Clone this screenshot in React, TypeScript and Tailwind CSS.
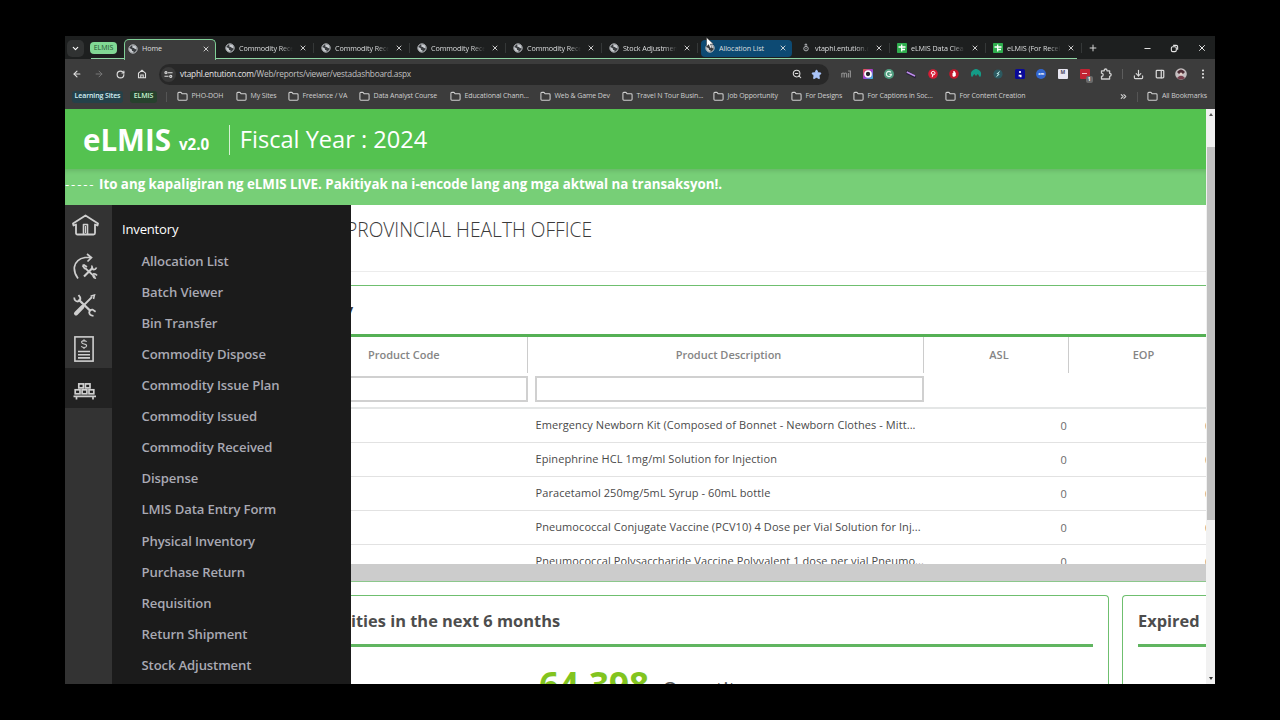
import React from 'react';
import {
  ArrowLeft,
  ArrowRight,
  ChevronDown,
  ChevronsRight,
  Download,
  Folder,
  Minus,
  MoreVertical,
  PanelRight,
  Plus,
  RotateCw,
  Star,
  X,
  ZoomOut
} from 'lucide-react';

type TabKind = 'globe' | 'timer' | 'sheet';

interface BrowserTab {
  title: string;
  kind: TabKind;
  state?: 'active' | 'hovered';
}

const TABS: BrowserTab[] = [
  { title: 'Home', kind: 'globe', state: 'active' },
  { title: 'Commodity Rece', kind: 'globe' },
  { title: 'Commodity Rece', kind: 'globe' },
  { title: 'Commodity Rece', kind: 'globe' },
  { title: 'Commodity Rece', kind: 'globe' },
  { title: 'Stock Adjustmen', kind: 'globe' },
  { title: 'Allocation List', kind: 'globe', state: 'hovered' },
  { title: 'vtaphl.entution.c', kind: 'timer' },
  { title: 'eLMIS Data Clea', kind: 'sheet' },
  { title: 'eLMIS (For Recei', kind: 'sheet' }
];

const BOOKMARKS = [
  { label: 'PHO-DOH', width: 'w-[59px]' },
  { label: 'My Sites', width: 'w-[52px]' },
  { label: 'Freelance / VA', width: 'w-[71px]' },
  { label: 'Data Analyst Course', width: 'w-[91px]' },
  { label: 'Educational Chann...', width: 'w-[90px]' },
  { label: 'Web & Game Dev', width: 'w-[82px]' },
  { label: 'Travel N Tour Busin...', width: 'w-[91px]' },
  { label: 'Job Opportunity', width: 'w-[78px]' },
  { label: 'For Designs', width: 'w-[62px]' },
  { label: 'For Captions in Soc...', width: 'w-[92px]' },
  { label: 'For Content Creation', width: 'w-[100px]' }
];

const MENU_ITEMS = [
  'Allocation List',
  'Batch Viewer',
  'Bin Transfer',
  'Commodity Dispose',
  'Commodity Issue Plan',
  'Commodity Issued',
  'Commodity Received',
  'Dispense',
  'LMIS Data Entry Form',
  'Physical Inventory',
  'Purchase Return',
  'Requisition',
  'Return Shipment',
  'Stock Adjustment'
];

const PRODUCTS = [
  'Emergency Newborn Kit (Composed of Bonnet - Newborn Clothes - Mitt...',
  'Epinephrine HCL 1mg/ml Solution for Injection',
  'Paracetamol 250mg/5mL Syrup - 60mL bottle',
  'Pneumococcal Conjugate Vaccine (PCV10) 4 Dose per Vial Solution for Inj...',
  'Pneumococcal Polysaccharide Vaccine Polyvalent 1 dose per vial Pneumo...'
];

function GlobeIcon() {
  return (
    <svg viewBox="0 0 16 16" className="size-[10px] shrink-0">
      <circle cx="8" cy="8" r="6.6" fill="#3a3d40" stroke="#c9ccd0" strokeWidth="1.6" />
      <path d="M2 6.5 L6 8.5 L6.5 11 L9 11.5 L8 14 L4.5 13.2 L2 10 Z M7 2 L12 3 L14 7 L11.5 8.5 L9.5 6.5 L7 6 Z" fill="#c9ccd0" />
    </svg>
  );
}

function TimerIcon() {
  return (
    <svg viewBox="0 0 16 16" className="size-[10px] shrink-0" fill="none" stroke="#b5b8bb" strokeWidth="1.5">
      <circle cx="8" cy="9" r="3.6" />
      <path d="M8 1.5 V5 M5.5 3 L8 1.5 L10 3 M8 7.5 V10" />
    </svg>
  );
}

function SheetIcon() {
  return (
    <svg viewBox="0 0 10 10" className="size-[10px] shrink-0">
      <rect width="10" height="10" rx="0.8" fill="#2fae4e" />
      <path d="M1.5 4 H8.5 M4.7 1.5 V8.5 M4.7 6.5 H8" stroke="#fff" strokeWidth="1.3" />
    </svg>
  );
}

const TAB_ICONS: Record<TabKind, React.ComponentType> = {
  globe: GlobeIcon,
  timer: TimerIcon,
  sheet: SheetIcon
};

function Tab({ tab }: { tab: BrowserTab }) {
  const Icon = TAB_ICONS[tab.kind];
  const isActive = tab.state === 'active';
  const isHovered = tab.state === 'hovered';

  return (
    <div className="flex h-6 w-24 shrink-0 items-center">
      <div
        className={`flex items-center ${
          isActive
            ? 'z-10 mt-[3px] -ml-[1px] h-[21px] w-[92px] rounded-t-[5px] border border-b-0 border-[#7fcf96] bg-[#3c3c3c] pb-[3px] pl-[3px]'
            : isHovered
            ? 'h-[17px] w-[91px] rounded-[4px] bg-[#0d4a73] pl-1'
            : 'h-[17px] w-[91px] pl-1'
        }`}
      >
        <Icon />
        <span
          className={`ml-1 w-[55px] overflow-hidden text-[7.2px] tracking-[-0.1px] whitespace-nowrap text-[#dcdedf] ${
            isActive || isHovered ? '' : '[mask-image:linear-gradient(to_right,black_75%,transparent_98%)]'
          }`}
        >
          {tab.title}
        </span>
        <X className="ml-[5px] size-[8px] shrink-0 text-[#e3e3e3]" strokeWidth={2.6} />
      </div>
      <div className={`ml-[1px] h-[10px] w-px ${isActive || isHovered ? '' : 'bg-[#353838]'}`} />
    </div>
  );
}

function TabStrip() {
  return (
    <div className="relative flex h-6 shrink-0 items-center bg-[#1d1f1f] pl-[2px]">
      <div className="absolute bottom-[1px] left-[26px] h-px w-[986px] bg-[#8fd3a3]" />
      <div className="absolute bottom-0 left-0 h-px w-full bg-[#3c3c3c]" />
      <div className="flex size-[17px] items-center justify-center rounded-[5px] bg-[#303232]">
        <ChevronDown className="size-[9px] text-white" strokeWidth={3} />
      </div>
      <div className="ml-[6px] flex h-3 w-[27px] items-center justify-center rounded-[4px] bg-[#81d894] text-[7px] text-[#1f5430]">
        ELMIS
      </div>
      <div className="ml-[8px] flex">
        {TABS.map((tab, index) => (
          <Tab key={index} tab={tab} />
        ))}
      </div>
      <Plus className="ml-[3px] size-[10px] text-[#d5d5d5]" strokeWidth={2.4} />
      <div className="mr-[8px] ml-auto flex items-center gap-[18px] text-[#e5e5e5]">
        <Minus className="size-[9px]" strokeWidth={2.6} />
        <svg viewBox="0 0 10 10" className="size-[9px]" fill="none" stroke="currentColor" strokeWidth="1.2">
          <rect x="1.5" y="3" width="5.5" height="5.5" rx="1.5" />
          <path d="M3.5 1.5 H7 Q8.5 1.5 8.5 3 V6.5" />
        </svg>
        <X className="size-[10px]" strokeWidth={2.4} />
      </div>
    </div>
  );
}

function Extensions() {
  return (
    <div className="flex items-center gap-[11.7px]">
      <svg viewBox="0 0 10 10" className="size-[10px]" fill="none" stroke="#8b8b8b" strokeWidth="1.2">
        <path d="M0.8 8.5 V4 M0.8 5 Q2.2 3 3.2 5 V8.5 M3.2 5 Q4.6 3 5.6 5 V8.5 M7.5 4 V8.5 M9.4 2 V8.5 M7 2 H10" />
      </svg>
      <svg viewBox="0 0 10 10" className="size-[10px]">
        <defs>
          <linearGradient id="lens" x1="0" y1="0" x2="1" y2="1">
            <stop offset="0" stopColor="#f05a3c" />
            <stop offset="0.5" stopColor="#a13bd0" />
            <stop offset="1" stopColor="#2fc6e0" />
          </linearGradient>
        </defs>
        <rect width="10" height="10" rx="1" fill="url(#lens)" />
        <circle cx="5" cy="5" r="3" fill="#24242c" stroke="#fff" strokeWidth="1.7" />
      </svg>
      <svg viewBox="0 0 10 10" className="size-[10px]">
        <circle cx="5" cy="5" r="5" fill="#4f9d7f" />
        <path d="M7 3.4 A2.6 2.6 0 1 0 7.5 5.4 H5.4" fill="none" stroke="#e8f5ef" strokeWidth="1.1" />
      </svg>
      <svg viewBox="0 0 10 10" className="size-[10px]">
        <path d="M0.5 1 L9.5 6.5 V9.5 L4 6.5 L0.5 5 Z" fill="#251a38" />
        <path d="M0.8 3 L9 7" stroke="#bd8ce8" strokeWidth="1.6" />
      </svg>
      <svg viewBox="0 0 10 10" className="size-[10px]">
        <circle cx="5" cy="5" r="4.8" fill="#d71c35" />
        <path d="M4.2 8.2 L5 4.3 M3.4 5.3 Q2.6 2.4 5.2 2.3 Q7.5 2.5 6.9 4.8 Q6 6.7 4.8 5.6" fill="none" stroke="#fff" strokeWidth="1" />
      </svg>
      <svg viewBox="0 0 10 10" className="size-[10px]">
        <circle cx="5" cy="5" r="4.8" fill="#c3172c" />
        <path d="M3.5 4 V7 Q5 8.8 6.8 6.8 V3.5 H6 V2.2 H5 V2 H4.3 V4 Z" fill="#fff" />
      </svg>
      <svg viewBox="0 0 10 10" className="size-[10px]">
        <path d="M1 8.2 A5 5 0 1 1 9 8.2 L6.8 5 L5 7 L3.2 5 Z" fill="#149b86" />
      </svg>
      <svg viewBox="0 0 10 10" className="size-[10px]">
        <circle cx="5" cy="5" r="4.6" fill="#2c5960" />
        <path d="M7.3 1.5 L3.3 5 H5 L2.8 8.5 L6.8 5.2 H5.2 Z" fill="#c3f0ee" />
      </svg>
      <svg viewBox="0 0 10 10" className="size-[10px]">
        <rect width="10" height="10" rx="1.6" fill="#0a0a98" />
        <path d="M5 2 V4 M3.6 6.7 H5.7 V8.3" stroke="#fff" strokeWidth="1.7" />
      </svg>
      <div className="flex size-[10px] items-center justify-center rounded-full bg-[#3266cf] text-[4px] font-bold text-white">
        zm
      </div>
      <div className="flex size-[10px] items-start justify-center rounded-[1px] bg-[#e9e7f2] text-[5px] leading-[7px] font-bold text-[#4b4860]">
        M
      </div>
      <div className="relative size-[10px] rounded-[1px] bg-[#c22232]">
        <div className="mt-[4px] ml-[2px] h-px w-[5px] bg-[#f4c0c5]" />
        <div className="absolute -right-[3px] -bottom-[4px] flex size-[7px] items-center justify-center rounded-[2px] bg-[#696969] text-[5px] font-bold text-white">
          1
        </div>
      </div>
    </div>
  );
}

function Toolbar() {
  return (
    <div className="flex h-[27px] shrink-0 items-center bg-[#3c3c3c] pt-[1px] pl-[7px]">
      <div className="flex items-center gap-[12px] text-[#dedede]">
        <ArrowLeft className="size-[10px]" strokeWidth={2.6} />
        <ArrowRight className="size-[10px] text-[#777777]" strokeWidth={2.4} />
        <RotateCw className="size-[9px]" strokeWidth={3} />
        <svg viewBox="0 0 10 10" className="size-[10px]" fill="none" stroke="currentColor" strokeWidth="1.1">
          <path d="M1.5 4.2 L5 1.3 L8.5 4.2 V8.8 H1.5 Z M3.8 8.8 V6 H6.2 V8.8" />
        </svg>
      </div>
      <div className="ml-[12px] flex h-[21px] w-[670px] items-center rounded-full bg-[#282828] pl-[2px] text-[#dedede]">
        <div className="flex size-[15px] items-center justify-center rounded-full bg-[#393939]">
          <svg viewBox="0 0 10 10" className="size-[9px]" fill="none" stroke="currentColor" strokeWidth="1.2">
            <path d="M4.5 3 H9.5 M0.5 7 H5" />
            <circle cx="2.2" cy="3" r="1.2" />
            <circle cx="7.5" cy="7" r="1.2" />
          </svg>
        </div>
        <span className="ml-[4px] text-[8.3px] tracking-[-0.22px] whitespace-nowrap text-[#e6e6e6]">
          vtaphl.entution.com<span className="text-[#c2c2c2]">/Web/reports/viewer/vestadashboard.aspx</span>
        </span>
        <ZoomOut className="ml-auto size-[10px]" strokeWidth={2.5} />
        <Star className="mr-[7px] ml-[9px] size-[11px] fill-[#a9c4f8] text-[#a9c4f8]" />
      </div>
      <div className="ml-[12px]">
        <Extensions />
      </div>
      <svg viewBox="0 0 12 12" className="ml-[10px] size-[12px]" fill="none" stroke="#d0d0d0" strokeWidth="1.3" strokeLinejoin="round">
        <path d="M1.5 2.8 H4.2 Q4.2 1 5.6 1 Q7 1 7 2.8 H9.6 V5.3 Q11.2 5.4 11.2 6.8 Q11.2 8.2 9.6 8.3 V11 H1.5 V8.5 Q3.2 8.3 3.2 6.8 Q3.2 5.4 1.5 5.2 Z" />
      </svg>
      <div className="ml-[10px] h-[10px] w-px bg-[#5d5d5d]" />
      <Download className="ml-[10px] size-[11px] text-[#d8d8d8]" strokeWidth={2.5} />
      <PanelRight className="ml-[11px] size-[10px] text-[#d8d8d8]" strokeWidth={3} />
      <svg viewBox="0 0 12 12" className="ml-[10px] size-[12px]">
        <circle cx="6" cy="6" r="5.8" fill="#c5bfc1" />
        <path d="M2 4 Q6 -1 10 4 L8 6 H4 Z" fill="#4d2d35" />
        <path d="M2 10 Q6 5 10 10 Q6 13 2 10 Z" fill="#77404d" />
        <circle cx="6" cy="6" r="1.6" fill="#e6cfc8" />
      </svg>
      <MoreVertical className="ml-[10px] size-[12px] text-[#dedede]" strokeWidth={2.4} />
    </div>
  );
}

function BookmarkBar() {
  return (
    <div className="flex h-[22px] shrink-0 items-center bg-[#3c3c3c] pb-[3px] pl-[7px] text-[7px] tracking-[-0.12px] whitespace-nowrap text-[#cfcfcf]">
      <span className="flex h-[12px] w-[51px] items-center justify-center rounded-[3px] bg-[#25414a] font-semibold text-[#d3f0f5]">
        Learning Sites
      </span>
      <span className="ml-[7px] flex h-[12px] w-[27px] items-center justify-center rounded-[3px] bg-[#27412d] font-semibold text-[#c7f5d0]">
        ELMIS
      </span>
      <div className="ml-[9px] h-[10px] w-px bg-[#555555]" />
      <div className="ml-[9.5px] flex">
        {BOOKMARKS.map((bookmark) => (
          <div key={bookmark.label} className={`flex shrink-0 items-center ${bookmark.width}`}>
            <Folder className="size-[11px] shrink-0" strokeWidth={2.3} />
            <span className="ml-[4px]">{bookmark.label}</span>
          </div>
        ))}
      </div>
      <div className="mr-[8px] ml-auto flex items-center">
        <ChevronsRight className="size-[9px]" strokeWidth={3} />
        <div className="ml-[9px] h-[10px] w-px bg-[#555555]" />
        <Folder className="ml-[9px] size-[11px]" strokeWidth={2.3} />
        <span className="ml-[4px]">All Bookmarks</span>
      </div>
    </div>
  );
}

function IconRail() {
  return (
    <nav className="flex w-[47px] shrink-0 flex-col bg-[#333333] text-[#cfcfcf]">
      <div className="flex h-[40px] items-center pl-[7px]">
        <svg viewBox="0 0 27 22" className="h-[22px] w-[27px]" fill="none" stroke="currentColor" strokeWidth="1.8" strokeLinejoin="round">
          <path d="M4 10.5 L1.5 11.5 L1 9.5 L13.5 1.5 L26 9.5 L25.5 11.5 L23 10.5 V19 Q23 20.5 21.5 20.5 H5.5 Q4 20.5 4 19 Z" />
          <path d="M11.5 20 V10.5 H15.5 V20" strokeWidth="1.6" />
          <path d="M13.5 12 V19" strokeWidth="1" />
        </svg>
      </div>
      <div className="flex h-[41px] items-center pt-[3px] pl-[8px]">
        <svg viewBox="0 0 26 28" className="h-[28px] w-[26px]" fill="none" stroke="currentColor" strokeWidth="1.7">
          <path d="M5 25.5 Q0.8 20 1.4 14 Q3 6 12 4.5 H18 M14 1 L18.5 4.5 L14.5 8.5" />
          <path d="M12 15 L22 24" />
          <path d="M9.5 12.5 L11 12 L14 14 M9.5 12.5 L12 16" />
          <path d="M20 14.5 L11 23.5" strokeWidth="2.2" />
          <path d="M19 12.5 Q18.5 15.5 20 16.5 Q22.5 17 23.5 14.5 M20 21 Q22.5 20.5 24 22.5 M20 23 Q21 25.5 23 25" />
        </svg>
      </div>
      <div className="flex h-[38px] items-center pl-[8px]">
        <svg viewBox="0 0 24 23" className="h-[23px] w-[24px]" fill="none" stroke="currentColor">
          <path d="M3 19.5 L9.5 12.8" strokeWidth="4" strokeLinecap="round" />
          <path d="M10 12 L19 3" strokeWidth="1.8" />
          <path d="M17.6 2.2 L21.5 1 L20.5 5" strokeWidth="1.5" />
          <path d="M5.5 5.5 L17.5 17" strokeWidth="2.4" />
          <path d="M1.2 3.5 Q1.5 7.5 5 7.5 Q8 6.5 7.2 3.5 L5.5 1" strokeWidth="1.8" />
          <path d="M20.5 21.8 Q16.5 21.5 16.2 18.5 Q16.8 15.4 19.5 15.6 L22.6 17.8" strokeWidth="1.8" />
        </svg>
      </div>
      <div className="flex h-[44px] items-center pl-[9px]">
        <svg viewBox="0 0 20 26" className="mt-[5px] h-[26px] w-[20px]" fill="none" stroke="currentColor" strokeWidth="1.6">
          <rect x="0.9" y="0.9" width="18.2" height="24.2" />
          <path d="M4 15.5 H16 M4 18.7 H16 M4 21.9 H16" />
          <path d="M12.6 5.8 Q12 4.6 10 4.6 Q7.6 4.8 7.6 6.3 Q7.8 7.8 10 8 Q12.7 8.3 12.6 10 Q12.3 11.5 10 11.5 Q7.8 11.4 7.4 10.2 M10 3.2 V4.8 M10 11.4 V13" strokeWidth="1.1" />
        </svg>
      </div>
      <div className="flex h-[40px] items-center bg-[#222222] pl-[8px]">
        <svg viewBox="0 0 24 17" className="mt-[7px] h-[17px] w-[24px]" fill="none" stroke="currentColor" strokeWidth="1.7">
          <rect x="5.8" y="0.9" width="4.6" height="4" />
          <rect x="12.4" y="0.9" width="4.6" height="4" />
          <rect x="2.2" y="6.8" width="4.8" height="4" />
          <rect x="9.1" y="6.8" width="4.8" height="4" />
          <rect x="16" y="6.8" width="4.8" height="4" />
          <path d="M0.5 13.4 H23 M3.5 14 V16.5 M20 14 V16.5" />
        </svg>
      </div>
    </nav>
  );
}

function InventoryMenu() {
  return (
    <aside className="w-[239px] shrink-0 bg-[#1b1b1b] pt-[9px]">
      <h2 className="flex h-[32px] items-center pl-[10px] text-[13.1px] tracking-[-0.2px] text-white">Inventory</h2>
      <ul className="pl-[29.5px] text-[13.1px] font-semibold tracking-[-0.12px] text-[#a9a9b3]">
        {MENU_ITEMS.map((label) => (
          <li key={label} className="flex h-[31.1px] items-center whitespace-nowrap">
            {label}
          </li>
        ))}
      </ul>
    </aside>
  );
}

function StockTable() {
  return (
    <section className="border-b border-[#8cc78c]">
      <div className="h-[49px] border-t border-[#6fbf6f] pt-[14px]">
        <h3 className="ml-[-7px] text-[17px] leading-[20px] font-semibold text-[#333333]">y</h3>
      </div>
      <div className="flex h-[38px] items-start border-t-[3px] border-[#55b055] text-[11px] font-semibold text-[#858585]">
        <div className="flex h-[36px] w-[177px] shrink-0 items-center border-r border-[#cccccc] pl-[17px]">Product Code</div>
        <div className="flex h-[36px] w-[396px] shrink-0 items-center justify-center border-r border-[#cccccc] pl-[6px]">
          Product Description
        </div>
        <div className="flex h-[36px] w-[145px] shrink-0 items-center justify-center border-r border-[#cccccc] pl-[6px]">ASL</div>
        <div className="flex h-[36px] w-[137px] items-center justify-center pl-[12px]">EOP</div>
      </div>
      <div className="flex h-[37px] items-start border-b-2 border-[#e4e6e6] pt-[4px]">
        <div className="h-[26px] w-[177px] shrink-0 border-y-2 border-r-2 border-[#d0d0d0]" />
        <div className="ml-[7px] h-[26px] w-[389px] shrink-0 border-2 border-[#d0d0d0]" />
      </div>
      <div className="h-[155px] overflow-hidden">
        {PRODUCTS.map((name) => (
          <div key={name} className="flex h-[34px] items-center border-b border-[#e2e2e2] pb-[1px]">
            <span className="ml-[184.5px] w-[389px] shrink-0 text-[11px] tracking-[0.08px] whitespace-nowrap text-[#4a4a4a]">{name}</span>
            <span className="w-[142.5px] shrink-0 pt-[2px] pl-[136px] text-[11px] text-[#6b6b6b]">0</span>
            <span className="ml-[138px] pt-[2px] text-[11px] text-[#6b6b6b]">0</span>
          </div>
        ))}
      </div>
      <div className="h-[17px] bg-[#cccccc]" />
    </section>
  );
}

function ExpiryCards() {
  return (
    <div className="mt-[13px] flex h-[110px]">
      <div className="w-[758px] shrink-0 rounded-tr-[4px] border-t border-r border-[#6fbf6f] pr-[15px]">
        <h3 className="flex h-[51px] items-center border-b-[3px] border-[#60b560] pt-[2px] text-[16.4px] font-bold whitespace-nowrap text-[#4d4d4d]">
          ities in the next 6 months
        </h3>
        <p className="mt-[20px] ml-[188px] flex items-baseline whitespace-nowrap">
          <span className="text-[35px] leading-[36px] font-bold text-[#82c41f]">64,398</span>
          <span className="ml-[13px] text-[21px] leading-[30px] text-[#555555]">Quantity</span>
        </p>
      </div>
      <div className="ml-[13px] grow overflow-hidden rounded-tl-[4px] border-t border-l border-[#6fbf6f] pl-[15px]">
        <h3 className="flex h-[51px] items-center border-b-[3px] border-[#60b560] pt-[2px] text-[16.4px] font-bold whitespace-nowrap text-[#4d4d4d] [word-spacing:2px]">
          Expired Commodities
        </h3>
      </div>
    </div>
  );
}

export default function App() {
  return (
    <div className="h-screen w-screen overflow-hidden bg-black px-[65px] py-9 font-['Open_Sans','Noto_Sans',sans-serif]">
      <div className="relative flex h-[648px] w-[1150px] flex-col">
        <TabStrip />
        <Toolbar />
        <BookmarkBar />
        <div className="flex min-h-0 grow overflow-hidden">
          <div className="flex w-[1141px] shrink-0 flex-col">
            <header className="flex h-[60px] shrink-0 items-center bg-[#54c250] pt-[2px] text-white">
              <span className="ml-[18px] text-[29.5px] font-bold">eLMIS</span>
              <span className="mt-[8px] ml-[8px] text-[15.2px] font-bold">v2.0</span>
              <div className="ml-[20px] h-[30px] w-px bg-[#d4f2d2]" />
              <span className="ml-[9.5px] text-[23.6px]">Fiscal Year : 2024</span>
            </header>
            <div className="flex h-[36px] shrink-0 items-center bg-[#77cf77] pb-[5px] text-[13.3px] font-bold whitespace-nowrap text-white shadow-[inset_0_4px_4px_-2px_rgba(0,0,0,0.12)]">
              <span className="w-[34px] font-normal tracking-[1.8px]">-----</span>
              <span>Ito ang kapaligiran ng eLMIS LIVE. Pakitiyak na i-encode lang ang mga aktwal na transaksyon!.</span>
            </div>
            <div className="flex min-h-0 grow">
              <IconRail />
              <InventoryMenu />
              <main className="min-w-0 grow overflow-hidden bg-white">
                <div className="h-[67px] border-b border-[#ececec] pt-[11px]">
                  <h1 className="ml-[-5px] text-[19.2px] leading-[28px] font-light text-[#3a3a3a]">PROVINCIAL HEALTH OFFICE</h1>
                </div>
                <div className="h-[13px]" />
                <StockTable />
                <ExpiryCards />
              </main>
            </div>
          </div>
          <div className="flex w-[9px] flex-col items-end justify-between bg-[#f1f1f1]">
            <div className="flex h-[37px] w-[8px] items-start justify-center pt-[4px]">
              <div className="size-0 border-x-2 border-b-[3px] border-x-transparent border-b-[#555555]" />
            </div>
            <div className="h-[373px] w-[8px] bg-[#c1c1c1]" />
            <div className="flex h-[164px] w-[8px] items-end justify-center pb-[4px]">
              <div className="size-0 border-x-2 border-t-[3px] border-x-transparent border-t-[#333333]" />
            </div>
          </div>
        </div>
        <svg viewBox="0 0 10 14" className="absolute top-0 left-[641px] h-[14px] w-[9px]">
          <path d="M0.6 0.8 V11 L3 8.8 L4.8 12.8 L6.4 12 L4.8 8.2 H8.2 Z" fill="#fff" stroke="#222" strokeWidth="0.5" />
        </svg>
      </div>
    </div>
  );
}
